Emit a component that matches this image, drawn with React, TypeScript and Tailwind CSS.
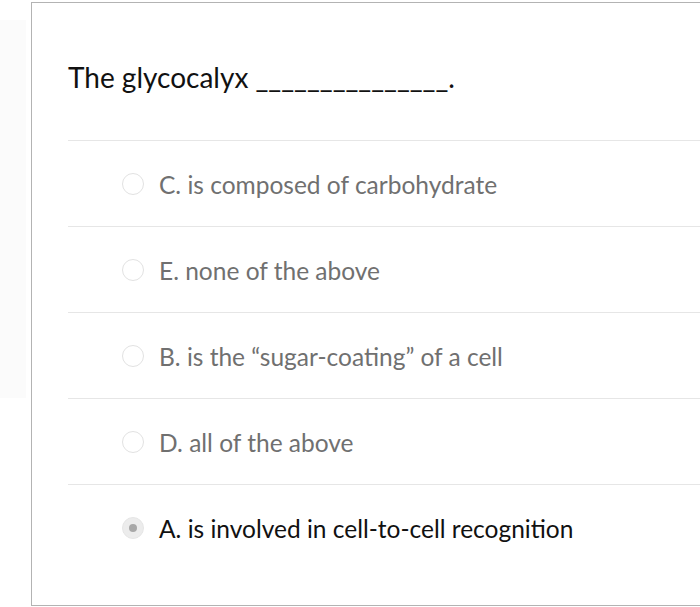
const options = [
  { label: "C. is composed of carbohydrate", selected: false },
  { label: "E. none of the above", selected: false },
  { label: "B. is the \u201csugar-coating\u201d of a cell", selected: false },
  { label: "D. all of the above", selected: false },
  { label: "A. is involved in cell-to-cell recognition", selected: true },
];

function Radio({ selected }: { selected: boolean }) {
  return (
    <span
      className={`flex h-[22px] w-[22px] shrink-0 items-center justify-center rounded-full border ${
        selected ? "border-[#e6e6e6] bg-[#ececec]" : "border-[#e2e2e2] bg-white"
      }`}
    >
      {selected && <span className="h-[8px] w-[8px] rounded-full bg-[#a8a8a8]" />}
    </span>
  );
}

export default function App() {
  return (
    <div className="relative h-[607px] w-[700px] overflow-hidden bg-white font-['Lato','Noto_Sans',sans-serif]">
      <div className="absolute left-0 top-[20px] h-[378px] w-[26px] bg-[#fbfbfb]" />
      <div className="relative ml-[31px] mt-[2px] h-[604px] w-[700px] border border-[#b3b3b3] bg-white pl-[36px]">
        <div className="pt-[53px] pb-[42px] text-[28px] leading-[42px] text-[#111]">
          The glycocalyx _______________.
        </div>
        {options.map((o) => (
          <div
            key={o.label}
            className="flex h-[86px] items-center border-t border-[#e6e6e6] pl-[54px]"
          >
            <Radio selected={o.selected} />
            <span
              className={`ml-[15px] pt-[3px] text-[24.5px] ${
                o.selected ? "text-[#111]" : "text-[#707070]"
              }`}
            >
              {o.label}
            </span>
          </div>
        ))}
      </div>
    </div>
  );
}
